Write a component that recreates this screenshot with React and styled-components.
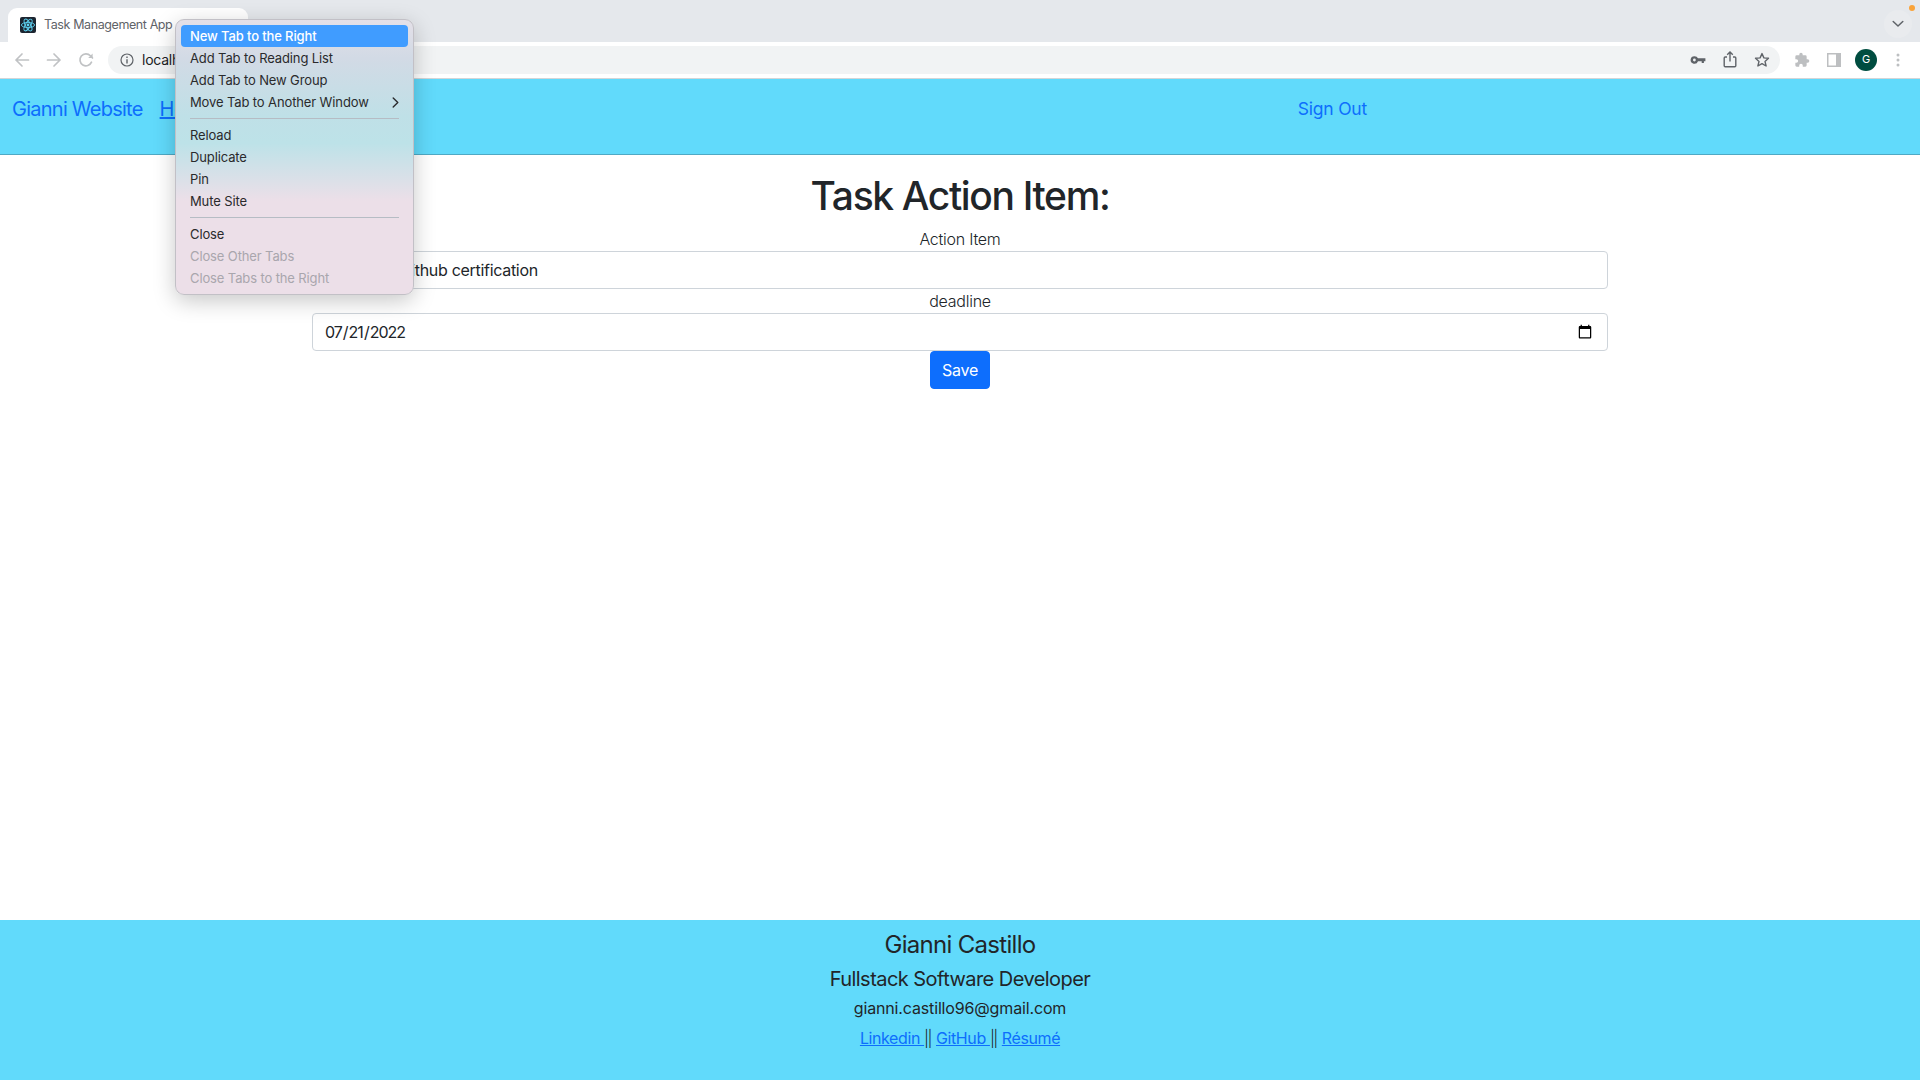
import React from "react";
import styled, { createGlobalStyle } from "styled-components";

const Global = createGlobalStyle`
  html, body { margin: 0; padding: 0; background: #fff; }
  body { font-family: Inter, "Liberation Sans", sans-serif; color: #212529; font-size: 16px; line-height: 1.5; letter-spacing: -0.25px; }
  * { box-sizing: border-box; }
`;

const Page = styled.div`
  position: relative;
  width: 1920px;
  height: 1080px;
  overflow: hidden;
  display: flex;
  flex-direction: column;
`;

const TabStrip = styled.div`
  position: relative;
  height: 42px;
  flex: none;
  background: #e5e8ec;
  display: flex;
  align-items: flex-end;
  padding-left: 8px;
`;

const Tab = styled.div`
  width: 240px;
  height: 34px;
  background: #fff;
  border-radius: 9px 9px 0 0;
  display: flex;
  align-items: center;
  gap: 8px;
  padding-left: 12px;
`;

const TabTitle = styled.span`
  font-size: 12.5px;
  color: #5f6368;
  letter-spacing: -0.4px;
  white-space: nowrap;
`;

const NewTab = styled.span`
  margin-left: 10px;
  margin-bottom: 7px;
  display: flex;
  color: #5f6368;
`;

const Chevron = styled.span`
  position: absolute;
  right: 8px;
  top: 10px;
  width: 28px;
  height: 28px;
  border-radius: 50%;
  background: #e9ebee;
  display: flex;
  align-items: center;
  justify-content: center;
  color: #5f6368;
`;

const OrangeDot = styled.span`
  position: absolute;
  top: 5px;
  right: 5px;
  width: 6px;
  height: 6px;
  border-radius: 50%;
  background: #f9a33a;
`;

const Toolbar = styled.div`
  height: 37px;
  flex: none;
  background: #fff;
  border-bottom: 1px solid #d3d5d7;
  display: flex;
  align-items: center;
  padding: 0 0 1px 14px;
`;

const NavIcons = styled.div`
  display: flex;
  align-items: center;
  gap: 16px;
  margin-right: 14px;
`;

const Omnibox = styled.div`
  width: 1672px;
  height: 28px;
  border-radius: 14px;
  background: #f1f3f4;
  display: flex;
  align-items: center;
  padding: 0 2px 0 12px;
  gap: 8px;
  flex: none;
`;

const Url = styled.span`
  font-size: 14px;
  color: #202124;
  flex: 1;
`;

const OmniIcons = styled.div`
  display: grid;
  grid-template-columns: repeat(3, 32px);
  justify-items: center;
  align-items: center;
`;

const ToolIcons = styled.div`
  display: grid;
  grid-template-columns: repeat(4, 32px);
  justify-items: center;
  align-items: center;
  margin-left: 6px;
`;

const Avatar = styled.span`
  width: 22px;
  height: 22px;
  border-radius: 50%;
  background: #004d40;
  color: #fff;
  font-size: 11px;
  display: flex;
  align-items: center;
  justify-content: center;
`;

const Navbar = styled.nav`
  height: 76px;
  flex: none;
  background: #61dafb;
  border-bottom: 1px solid #4fa9c4;
  display: flex;
  align-items: flex-start;
  padding: 15px 553px 0 12px;
`;

const Brand = styled.a`
  font-size: 20px;
  line-height: 30px;
  letter-spacing: -0.75px;
  color: #0d6efd;
  margin-right: 17px;
`;

const NavLink = styled.a`
  font-size: 20px;
  line-height: 30px;
  color: #0d6efd;
  text-decoration: ${(p) => (p.$underline ? "underline" : "none")};
`;

const SignOut = styled.a`
  font-size: 17.5px;
  line-height: 30px;
  letter-spacing: -0.2px;
  color: #0d6efd;
  margin-left: auto;
`;

const Main = styled.main`
  flex: 1;
  display: flex;
  flex-direction: column;
  align-items: center;
  padding-top: 17px;
`;

const Heading = styled.h1`
  margin: 0 0 7px;
  font-size: 39px;
  line-height: 48px;
  font-weight: 450;
  letter-spacing: -1.35px;
  color: #212529;
`;

const FormBox = styled.form`
  width: 1296px;
  display: flex;
  flex-direction: column;
  align-items: center;
`;

const Label = styled.label`
  display: block;
  line-height: 24px;
  height: 24px;
  text-align: center;
  font-weight: 300;
`;

const Field = styled.input`
  display: block;
  width: 100%;
  height: 38px;
  padding: 6px 12px 6px ${(p) => (p.type === "date" ? "11px" : "12px")};
  border: 1px solid #ced4da;
  border-radius: 4px;
  font: inherit;
  font-size: 16px;
  letter-spacing: ${(p) => (p.type === "date" ? "-1px" : "-0.3px")};
  color: #212529;
  background: #fff;
  outline: none;
`;

const SaveButton = styled.button`
  width: 60px;
  height: 38px;
  border: 1px solid #0d6efd;
  background: #0d6efd;
  color: #fff;
  border-radius: 4px;
  font: inherit;
  font-size: 16px;
  letter-spacing: inherit;
  padding: 0;
`;

const Footer = styled.footer`
  height: 160px;
  flex: none;
  background: #61dafb;
  text-align: center;
  padding-top: 8px;
`;

const FootName = styled.h3`
  margin: 0 0 2px;
  font-size: 24px;
  line-height: 34px;
  font-weight: 400;
  letter-spacing: -0.7px;
`;

const FootRole = styled.h4`
  margin: 0 0 2px;
  font-size: 20px;
  line-height: 30px;
  font-weight: 400;
  letter-spacing: -0.55px;
`;

const FootMail = styled.p`
  margin: 0 0 6px;
  font-size: 16px;
  line-height: 24px;
  letter-spacing: -0.15px;
`;

const FootLinks = styled.p`
  margin: 0;
  font-size: 16px;
  line-height: 24px;
  letter-spacing: -0.4px;
`;

const FootLink = styled.a`
  color: #0d6efd;
  text-decoration: underline;
`;

const Bars = styled.span`
  letter-spacing: -1.6px;
  margin-right: 1px;
  font-weight: 300;
`;

const Menu = styled.div`
  position: absolute;
  left: 175px;
  top: 19px;
  width: 239px;
  height: 276px;
  padding: 5px 5px;
  border-radius: 9px;
  border: 1px solid #c2c0c6;
  background: linear-gradient(180deg, #e4e0e8 0%, #d2dae5 14%, #bfe0e7 35%, #bde2e8 45%, #ecdfe8 66%, #ecdfe8 100%);
  box-shadow: 0 6px 22px rgba(0, 0, 0, 0.22);
  display: flex;
  flex-direction: column;
  font-size: 13px;
`;

const Item = styled.div`
  height: 22px;
  line-height: 22px;
  padding: 0 9px 0 9px;
  border-radius: 4px;
  white-space: nowrap;
  display: flex;
  align-items: center;
  justify-content: space-between;
  letter-spacing: -0.12px;
  color: ${(p) => (p.$active ? "#fff" : p.$disabled ? "#a9a6ad" : "#2a2a2c")};
  background: ${(p) => (p.$active ? "#409cff" : "transparent")};
  font-weight: ${(p) => (p.$active ? 500 : 400)};
`;

const Separator = styled.div`
  height: 1px;
  margin: 5px 9px;
  background: #b6bcc4;
  flex: none;
`;

const stroke = { fill: "none", strokeLinecap: "round", strokeLinejoin: "round" };

const ReactFav = () => (
  <svg width="16" height="16" viewBox="0 0 16 16">
    <rect width="16" height="16" rx="2" fill="#1c2530" />
    <g fill="none" stroke="#5ed3f3" strokeWidth="0.9">
      <ellipse cx="8" cy="8" rx="6.6" ry="2.6" />
      <ellipse cx="8" cy="8" rx="6.6" ry="2.6" transform="rotate(60 8 8)" />
      <ellipse cx="8" cy="8" rx="6.6" ry="2.6" transform="rotate(120 8 8)" />
    </g>
    <circle cx="8" cy="8" r="1.4" fill="#5ed3f3" />
  </svg>
);

const ArrowLeft = () => (
  <svg width="16" height="16" viewBox="0 0 16 16" stroke="#c0c2c4" strokeWidth="1.7" {...stroke}>
    <path d="M14.5 8H2M8 2 2 8l6 6" />
  </svg>
);

const ArrowRight = () => (
  <svg width="16" height="16" viewBox="0 0 16 16" stroke="#c0c2c4" strokeWidth="1.7" {...stroke}>
    <path d="M1.5 8H14M8 2l6 6-6 6" />
  </svg>
);

const Reload = () => (
  <svg width="16" height="16" viewBox="0 0 16 16" stroke="#c0c2c4" strokeWidth="1.7" {...stroke}>
    <path d="M13.5 10.2A6 6 0 1 1 12.4 3.8L14.5 6" />
    <path d="M14.6 1.6V6h-4.4" fill="#c0c2c4" stroke="none" />
  </svg>
);

const Info = () => (
  <svg width="14" height="14" viewBox="0 0 14 14" fill="none" stroke="#5f6368" strokeWidth="1.2">
    <circle cx="7" cy="7" r="6" />
    <path d="M7 6.2V10.4" strokeWidth="1.4" />
    <path d="M7 3.6v1.4" strokeWidth="1.4" />
  </svg>
);

const KeyIcon = () => (
  <svg width="16" height="16" viewBox="0 0 16 16" fill="#5f6368">
    <path fillRule="evenodd" d="M4.4 4.2A3.8 3.8 0 0 1 8 6.3h7.4v2.9h-1.5v1.7h-2.2V9.2H8A3.8 3.8 0 1 1 4.4 4.2Zm0 2.4a1.4 1.4 0 1 0 0 2.8 1.4 1.4 0 0 0 0-2.8Z" />
  </svg>
);

const ShareIcon = () => (
  <svg width="14" height="17" viewBox="0 0 14 17" fill="none" stroke="#5f6368" strokeWidth="1.4">
    <path d="M4 6H2.2a1 1 0 0 0-1 1v7.8a1 1 0 0 0 1 1h9.6a1 1 0 0 0 1-1V7a1 1 0 0 0-1-1H10" />
    <path d="M7 10.5V1.4M4.2 3.8 7 1l2.8 2.8" />
  </svg>
);

const StarIcon = () => (
  <svg width="16" height="16" viewBox="0 0 16 16" fill="none" stroke="#5f6368" strokeWidth="1.4" strokeLinejoin="round">
    <path d="M8 1.6l1.9 4.3 4.6.4-3.5 3.1 1.1 4.6L8 11.6 3.9 14l1.1-4.6L1.5 6.3l4.6-.4Z" />
  </svg>
);

const PuzzleIcon = () => (
  <svg width="16" height="16" viewBox="0 0 24 24" fill="#bdbfc1">
    <path d="M20.5 11H19V7a2 2 0 0 0-2-2h-4V3.5a2.5 2.5 0 0 0-5 0V5H4a2 2 0 0 0-2 2v3.8h1.5a2.7 2.7 0 0 1 0 5.4H2V20a2 2 0 0 0 2 2h3.8v-1.5a2.7 2.7 0 0 1 5.4 0V22H17a2 2 0 0 0 2-2v-4h1.5a2.5 2.5 0 0 0 0-5Z" />
  </svg>
);

const SidebarIcon = () => (
  <svg width="14" height="14" viewBox="0 0 14 14">
    <rect width="14" height="14" fill="#bdbfc1" />
    <rect x="1.5" y="1.5" width="7.5" height="11" fill="#fff" />
  </svg>
);

const DotsIcon = () => (
  <svg width="4" height="14" viewBox="0 0 4 14" fill="#bdbfc1">
    <circle cx="2" cy="2" r="1.5" />
    <circle cx="2" cy="7" r="1.5" />
    <circle cx="2" cy="12" r="1.5" />
  </svg>
);

const ChevronDown = () => (
  <svg width="12" height="8" viewBox="0 0 12 8" stroke="currentColor" strokeWidth="1.5" {...stroke}>
    <path d="M1.2 1.5 6 6l4.8-4.5" />
  </svg>
);

const PlusIcon = () => (
  <svg width="12" height="12" viewBox="0 0 12 12" stroke="currentColor" strokeWidth="1.4" {...stroke}>
    <path d="M6 1v10M1 6h10" />
  </svg>
);

const SubArrow = () => (
  <svg width="7" height="11" viewBox="0 0 7 11" stroke="#2a2a2c" strokeWidth="1.4" {...stroke}>
    <path d="M1.2 1 5.8 5.5 1.2 10" />
  </svg>
);

export default function App() {
  return (
    <Page>
      <Global />
      <TabStrip>
        <Tab>
          <ReactFav />
          <TabTitle>Task Management App</TabTitle>
        </Tab>
        <NewTab><PlusIcon /></NewTab>
        <Chevron><ChevronDown /></Chevron>
        <OrangeDot />
      </TabStrip>
      <Toolbar>
        <NavIcons>
          <ArrowLeft />
          <ArrowRight />
          <Reload />
        </NavIcons>
        <Omnibox>
          <Info />
          <Url>localhost:3000/tasks/edit</Url>
          <OmniIcons>
            <KeyIcon />
            <ShareIcon />
            <StarIcon />
          </OmniIcons>
        </Omnibox>
        <ToolIcons>
          <PuzzleIcon />
          <SidebarIcon />
          <Avatar>G</Avatar>
          <DotsIcon />
        </ToolIcons>
      </Toolbar>
      <Navbar>
        <Brand>Gianni Website</Brand>
        <NavLink $underline>Home</NavLink>
        <SignOut>Sign Out</SignOut>
      </Navbar>
      <Main>
        <Heading>Task Action Item:</Heading>
        <FormBox>
          <Label>Action Item</Label>
          <Field type="text" defaultValue="Complete Github certification" />
          <Label>deadline</Label>
          <Field type="date" defaultValue="2022-07-21" />
          <SaveButton type="button">Save</SaveButton>
        </FormBox>
      </Main>
      <Footer>
        <FootName>Gianni Castillo</FootName>
        <FootRole>Fullstack Software Developer</FootRole>
        <FootMail>gianni.castillo96@gmail.com</FootMail>
        <FootLinks>
          <FootLink>Linkedin </FootLink><Bars>||</Bars> <FootLink>GitHub </FootLink><Bars>||</Bars> <FootLink>Résumé</FootLink>
        </FootLinks>
      </Footer>
      <Menu>
        <Item $active>New Tab to the Right</Item>
        <Item>Add Tab to Reading List</Item>
        <Item>Add Tab to New Group</Item>
        <Item>Move Tab to Another Window <SubArrow /></Item>
        <Separator />
        <Item>Reload</Item>
        <Item>Duplicate</Item>
        <Item>Pin</Item>
        <Item>Mute Site</Item>
        <Separator />
        <Item>Close</Item>
        <Item $disabled>Close Other Tabs</Item>
        <Item $disabled>Close Tabs to the Right</Item>
      </Menu>
    </Page>
  );
}
